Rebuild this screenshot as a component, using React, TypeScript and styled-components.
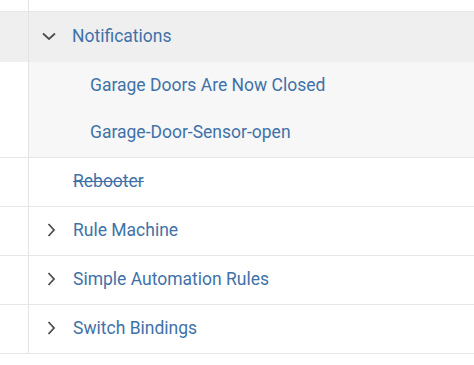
import React from 'react'
import styled, { createGlobalStyle } from 'styled-components'

const GlobalStyle = createGlobalStyle`
  body {
    margin: 0;
    background: #fff;
    font-family: Roboto, 'Liberation Sans', sans-serif;
  }
`

const List = styled.div`
  width: 474px;
  display: flex;
  flex-direction: column;
`

const Row = styled.div<{ $bg?: string; $h: number; $border?: boolean }>`
  display: grid;
  grid-template-columns: 29px 1fr;
  height: ${p => p.$h}px;
  background: ${p => p.$bg || '#fff'};
  border-bottom: ${p => (p.$border ? '1px solid #e6e6e6' : 'none')};
  box-sizing: border-box;
`

const Gutter = styled.div<{ $bg?: string }>`
  border-right: 1px solid #e3e3e3;
  background: ${p => p.$bg || 'transparent'};
`

const Cell = styled.div<{ $indent: number }>`
  display: flex;
  align-items: center;
  padding-left: ${p => p.$indent}px;
  padding-bottom: 3px;
`

const Chevron = styled.span<{ $shift?: number }>`
  width: 16px;
  height: 16px;
  display: flex;
  align-items: center;
  justify-content: center;
  margin-left: ${p => p.$shift || 0}px;
  margin-right: ${p => 15 - (p.$shift || 0)}px;
  color: #4d4d4d;
`

const Label = styled.span<{ $struck?: boolean }>`
  font-size: 17.5px;
  color: #3f72a8;
  text-decoration: ${p => (p.$struck ? 'line-through' : 'none')};
  white-space: nowrap;
`

const Down = () => (
  <svg width="16" height="16" viewBox="0 0 16 16" fill="none">
    <path d="M2 5.5 L8 11 L14 5.5" stroke="currentColor" strokeWidth="1.8" />
  </svg>
)

const Right = () => (
  <svg width="16" height="16" viewBox="0 0 16 16" fill="none">
    <path d="M5.5 2 L11 8 L5.5 14" stroke="currentColor" strokeWidth="1.8" />
  </svg>
)

const collapsed = ['Rule Machine', 'Simple Automation Rules', 'Switch Bindings']

export default function App() {
  return (
    <>
      <GlobalStyle />
      <List>
        <Row $h={12} $border>
          <Gutter />
          <div />
        </Row>
        <Row $h={50} $bg="#efefef">
          <Gutter />
          <Cell $indent={12}>
            <Chevron><Down /></Chevron>
            <Label>Notifications</Label>
          </Cell>
        </Row>
        <Row $h={48} $bg="#f7f7f7">
          <Gutter $bg="#fff" />
          <Cell $indent={61}>
            <Label>Garage Doors Are Now Closed</Label>
          </Cell>
        </Row>
        <Row $h={48} $bg="#f7f7f7" $border>
          <Gutter $bg="#fff" />
          <Cell $indent={61}>
            <Label>Garage-Door-Sensor-open</Label>
          </Cell>
        </Row>
        <Row $h={49} $border>
          <Gutter />
          <Cell $indent={44}>
            <Label $struck>Rebooter</Label>
          </Cell>
        </Row>
        {collapsed.map(name => (
          <Row key={name} $h={49} $border>
            <Gutter />
            <Cell $indent={13}>
              <Chevron $shift={1}><Right /></Chevron>
              <Label>{name}</Label>
            </Cell>
          </Row>
        ))}
      </List>
    </>
  )
}
